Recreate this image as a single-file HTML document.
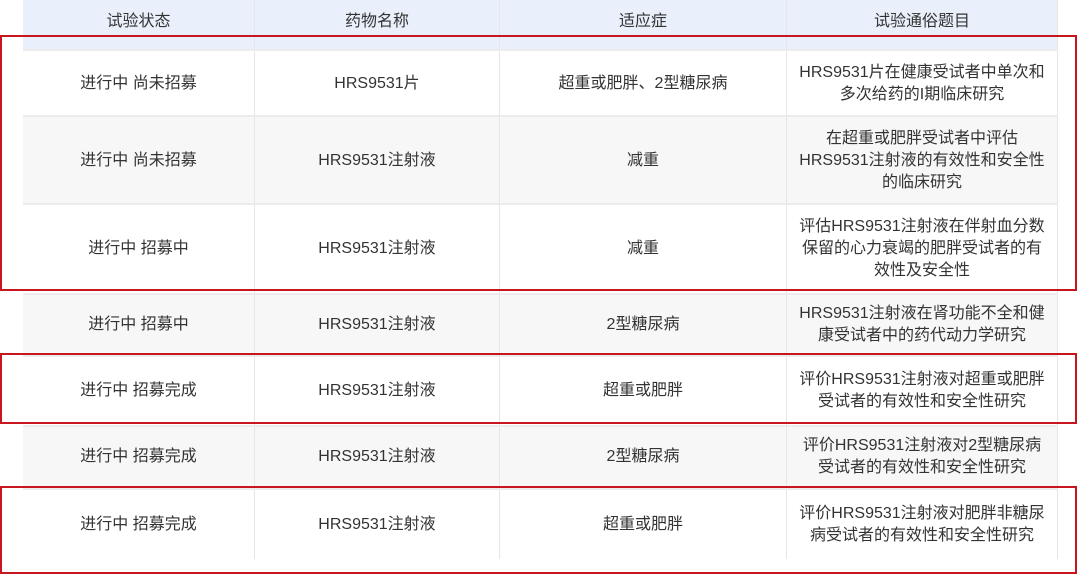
<!DOCTYPE html>
<html><head><meta charset="utf-8"><style>
body{margin:0;width:1080px;height:574px;background:#fff;position:relative;overflow:hidden;font-family:"Liberation Sans","Noto Sans CJK SC",sans-serif;color:#333;font-size:16px}
.r{position:absolute;left:23px;width:1035px;display:flex;border-top:2px solid #ececec}
.r div{display:flex;align-items:center;justify-content:center;text-align:center;border-right:1px solid #e6e6e6;line-height:22px;box-sizing:border-box}
.c1{width:232px}.c2{width:245px}.c3{width:287px}.c4{width:271px;padding:0 10px}
.g{background:#f7f7f7}
.h{background:#e9f0fb;border-top:none}
.box{position:absolute;left:0;width:1077px;border:2px solid #c8161e;box-sizing:border-box}
</style></head><body>
<div class="r h" style="top:0;height:49px"><div class="c1" style="align-items:flex-start;padding-top:11px">试验状态</div><div class="c2" style="align-items:flex-start;padding-top:11px">药物名称</div><div class="c3" style="align-items:flex-start;padding-top:11px">适应症</div><div class="c4" style="align-items:flex-start;padding-top:11px">试验通俗题目</div></div>
<div class="r" style="top:49px;height:66px"><div class="c1">进行中 尚未招募</div><div class="c2">HRS9531片</div><div class="c3">超重或肥胖、2型糖尿病</div><div class="c4">HRS9531片在健康受试者中单次和多次给药的I期临床研究</div></div>
<div class="r g" style="top:115px;height:88px"><div class="c1">进行中 尚未招募</div><div class="c2">HRS9531注射液</div><div class="c3">减重</div><div class="c4">在超重或肥胖受试者中评估HRS9531注射液的有效性和安全性的临床研究</div></div>
<div class="r" style="top:203px;height:88px"><div class="c1">进行中 招募中</div><div class="c2">HRS9531注射液</div><div class="c3">减重</div><div class="c4">评估HRS9531注射液在伴射血分数保留的心力衰竭的肥胖受试者的有效性及安全性</div></div>
<div class="r g" style="top:293px;height:60px"><div class="c1">进行中 招募中</div><div class="c2">HRS9531注射液</div><div class="c3">2型糖尿病</div><div class="c4">HRS9531注射液在肾功能不全和健康受试者中的药代动力学研究</div></div>
<div class="r" style="top:355px;height:68px"><div class="c1">进行中 招募完成</div><div class="c2">HRS9531注射液</div><div class="c3">超重或肥胖</div><div class="c4">评价HRS9531注射液对超重或肥胖受试者的有效性和安全性研究</div></div>
<div class="r g" style="top:425px;height:60px"><div class="c1">进行中 招募完成</div><div class="c2">HRS9531注射液</div><div class="c3">2型糖尿病</div><div class="c4">评价HRS9531注射液对2型糖尿病受试者的有效性和安全性研究</div></div>
<div class="r" style="top:488px;height:69px"><div class="c1">进行中 招募完成</div><div class="c2">HRS9531注射液</div><div class="c3">超重或肥胖</div><div class="c4">评价HRS9531注射液对肥胖非糖尿病受试者的有效性和安全性研究</div></div>
<div class="box" style="top:35px;height:256px"></div>
<div class="box" style="top:353px;height:71px"></div>
<div class="box" style="top:486px;height:88px"></div>
</body></html>
